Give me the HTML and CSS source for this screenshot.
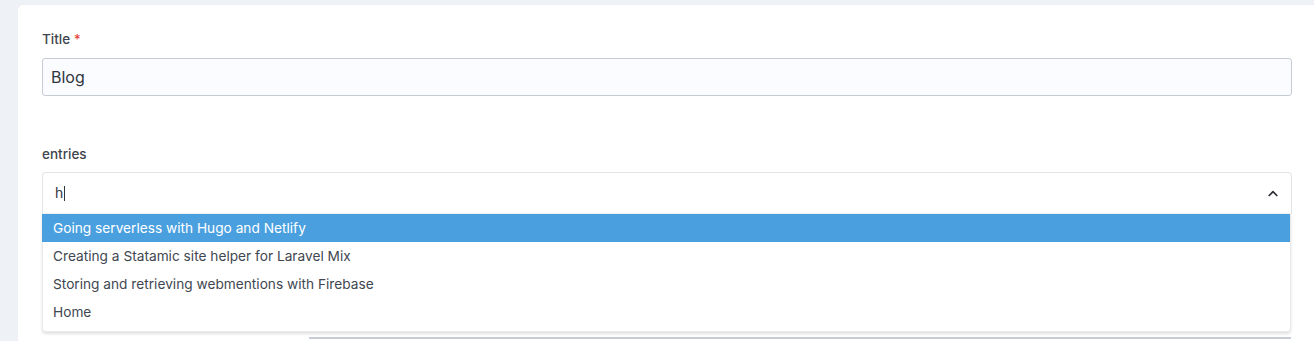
FILE: index.html
```html
<!DOCTYPE html>
<html>
<head>
<meta charset="utf-8">
<link rel="stylesheet" href="styles.css">
</head>
<body>
<div class="page">
  <div class="card">
    <div class="field">
      <label class="label">Title <span class="req">*</span></label>
      <div class="text-input">Blog</div>
    </div>
    <div class="field field-entries">
      <label class="label">entries</label>
      <div class="select-wrap">
        <div class="select">
          <span class="search">h</span><span class="caret"></span>
          <svg class="chev" width="10" height="7" viewBox="0 0 10 7"><path d="M1.2 5.5 L5 1.7 L8.8 5.5" fill="none" stroke="#2b2f35" stroke-width="1.7" stroke-linecap="round" stroke-linejoin="round"/></svg>
        </div>
        <ul class="menu">
          <li class="opt active">Going serverless with Hugo and Netlify</li>
          <li class="opt">Creating a Statamic site helper for Laravel Mix</li>
          <li class="opt">Storing and retrieving webmentions with Firebase</li>
          <li class="opt">Home</li>
        </ul>
      </div>
      <div class="under-box"></div>
      <div class="under-line"></div>
    </div>
  </div>
</div>
</body>
</html>
```
FILE: styles.css
```css
html, body {
  margin: 0;
  padding: 0;
  overflow: hidden;
}
body {
  background: #eef1f5;
  font-family: Inter, "Noto Sans", sans-serif;
  color: #3f4751;
  width: 1314px;
  height: 341px;
}
.page {
  padding: 5px 0 0 18px;
  height: 336px;
  overflow: hidden;
}
.card {
  background: #fff;
  border-radius: 5px 0 0 0;
  padding: 24px 22px 0 24px;
  height: 336px;
  box-sizing: border-box;
  box-shadow: 0 0 1px rgba(0,0,0,0.06);
}
.field {
  display: flex;
  flex-direction: column;
}
.label {
  font-size: 13.5px;
  font-weight: 500;
  line-height: 20px;
  height: 20px;
  margin-bottom: 9px;
  color: #3d444c;
}
.req {
  color: #e3443c;
}
.text-input {
  box-sizing: border-box;
  height: 38px;
  border: 1px solid #c6ccd4;
  border-radius: 3px;
  background: #fafcff;
  font-size: 16px;
  line-height: 36px;
  padding: 0 8px;
  color: #30363d;
}
.field-entries {
  margin-top: 48px;
}
.field-entries .label {
  margin-bottom: 8px;
}
.select-wrap {
  position: relative;
  z-index: 2;
}
.select {
  box-sizing: border-box;
  height: 42px;
  border: 1px solid #e1e3e6;
  border-bottom-color: #f1f1f1;
  border-radius: 4px 4px 0 0;
  background: #fff;
  display: flex;
  align-items: center;
  padding: 0 12px;
  font-size: 14px;
  color: #30363d;
}
.search {
  line-height: 16px;
}
.caret {
  display: inline-block;
  width: 1px;
  height: 15px;
  background: #30363d;
  margin-left: 1px;
}
.chev {
  margin-left: auto;
  margin-right: 1px;
}
.menu {
  position: absolute;
  top: 42px;
  left: 0;
  right: 1px;
  margin: 0;
  padding: 0 0 5px 0;
  list-style: none;
  background: #fff;
  border: 1px solid rgba(0,0,0,0.08);
  border-top: none;
  border-radius: 0 0 4px 4px;
  box-shadow: 0 2px 3px rgba(0,0,0,0.12);
}
.opt {
  height: 28px;
  line-height: 28px;
  padding: 0 10px;
  font-size: 13.7px;
  color: #3f4751;
}
.opt.active {
  background: #4aa0df;
  color: #fff;
  margin-left: -1px;
  padding-left: 11px;
}
.under-box {
  margin-top: 73px;
  height: 36px;
  border-left: 1px solid #c6ccd4;
  border-right: 1px solid #c6ccd4;
  margin-left: 1px;
  margin-right: 1px;
}
.under-line {
  margin-top: 14px;
  margin-left: 267px;
  margin-right: 1px;
  border-top: 2px solid #c6ccd4;
}
```
